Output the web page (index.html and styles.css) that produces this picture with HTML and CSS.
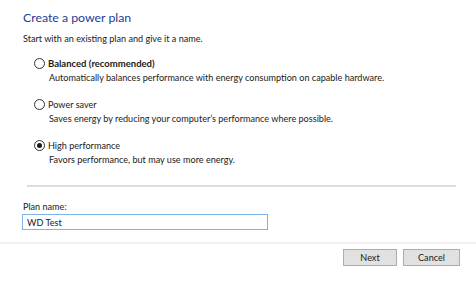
FILE: index.html
```html
<!DOCTYPE html>
<html lang="en">
<head>
    <meta charset="UTF-8">
    <title>Create a power plan</title>
    <link rel="stylesheet" href="styles.css">
</head>
<body>
    <div class="page">
        <div class="content">
            <h1 class="title">Create a power plan</h1>
            <p class="intro">Start with an existing plan and give it a name.</p>

            <div class="plans">
                <label class="plan">
                    <span class="plan-head">
                        <input type="radio" name="plan" value="balanced">
                        <span class="radio"></span>
                        <b>Balanced (recommended)</b>
                    </span>
                    <span class="plan-desc">Automatically balances performance with energy consumption on capable hardware.</span>
                </label>
                <label class="plan">
                    <span class="plan-head">
                        <input type="radio" name="plan" value="saver">
                        <span class="radio"></span>
                        Power saver
                    </span>
                    <span class="plan-desc">Saves energy by reducing your computer’s performance where possible.</span>
                </label>
                <label class="plan">
                    <span class="plan-head">
                        <input type="radio" name="plan" value="high" checked>
                        <span class="radio"></span>
                        High performance
                    </span>
                    <span class="plan-desc">Favors performance, but may use more energy.</span>
                </label>
            </div>

            <hr class="divider">

            <label class="name-label" for="plan-name">Plan name:</label>
            <input type="text" class="name-input" id="plan-name" value="WD Test">
        </div>

        <div class="footer">
            <button type="button" class="btn">Next</button>
            <button type="button" class="btn btn-cancel">Cancel</button>
        </div>
    </div>
</body>
</html>
```

FILE: styles.css
```css
body {
    margin: 0;
    background-color: #ffffff;
    font-family: "Segoe UI", Lato, sans-serif;
    font-size: 9.1px;
    color: #1a1a1a;
}

.content {
    padding: 8px 20px 0 23px;
}

.title {
    margin: 0;
    font-size: 12.3px;
    font-weight: normal;
    line-height: 20px;
    color: #1e3c96;
}

.intro {
    margin: 3px 0 0;
    line-height: 16px;
}

.plans {
    margin-top: 8px;
    padding-left: 11px;
}

.plan {
    display: flex;
    flex-direction: column;
    height: 41px;
    cursor: pointer;
}

.plan-head {
    display: flex;
    align-items: center;
    height: 16px;
}

.plan-head b {
    font-size: 9.5px;
}

.plan-head input {
    display: none;
}

.radio {
    width: 9px;
    height: 9px;
    border: 1px solid #333333;
    border-radius: 50%;
    margin-right: 3px;
    position: relative;
}

.plan-head input:checked + .radio::after {
    content: "";
    position: absolute;
    left: 2px;
    top: 2px;
    width: 5px;
    height: 5px;
    border-radius: 50%;
    background-color: #1a1a1a;
}

.plan-desc {
    padding-left: 15px;
    line-height: 14px;
}

.divider {
    margin: 7px 0 0 4px;
    border: none;
    border-top: 2px solid #dcdcdc;
}

.name-label {
    display: block;
    margin-top: 13px;
    line-height: 14px;
}

.name-input {
    display: block;
    width: 246px;
    height: 16px;
    box-sizing: border-box;
    margin-left: -1px;
    padding: 0 4px;
    border: 1px solid #7eb4ea;
    font-family: inherit;
    font-size: 9.1px;
    color: #1a1a1a;
    outline: none;
}

.footer {
    display: flex;
    justify-content: flex-end;
    gap: 6px;
    margin-top: 12px;
    padding: 5px 16px 0 0;
    border-top: 2px solid #f0f0f0;
}

.btn {
    width: 54px;
    height: 17px;
    padding: 0;
    border: 1px solid #adadad;
    background-color: #e1e1e1;
    font-family: inherit;
    font-size: 9.1px;
    color: #1a1a1a;
}

.btn-cancel {
    width: 57px;
}
```
